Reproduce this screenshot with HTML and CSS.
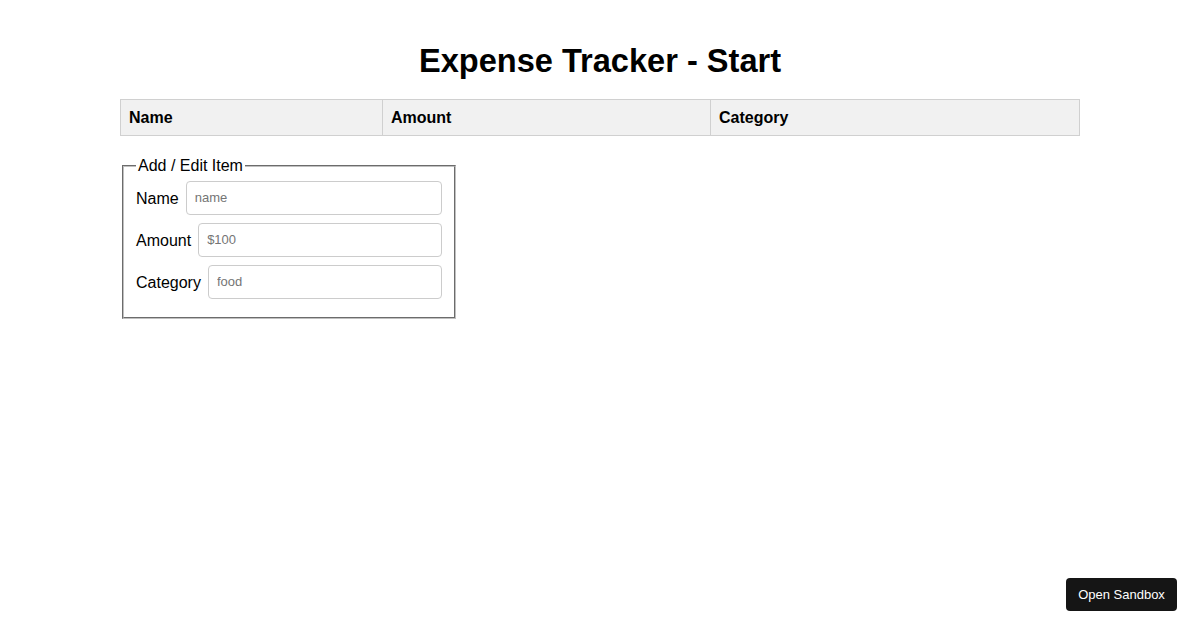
FILE: index.html
```html
<!DOCTYPE html>
<html lang="en">
<head>
<meta charset="utf-8">
<title>Expense Tracker - Start</title>
<link rel="stylesheet" href="styles.css">
</head>
<body>
<main class="app">
  <h1 class="title">Expense Tracker - Start</h1>
  <table class="expenses">
    <thead>
      <tr>
        <th class="col-name">Name</th>
        <th class="col-amount">Amount</th>
        <th class="col-category">Category</th>
      </tr>
    </thead>
    <tbody></tbody>
  </table>
  <form class="item-form">
    <fieldset class="item-fieldset">
      <legend class="item-legend">Add / Edit Item</legend>
      <div class="field">
        <label class="field-label" for="name">Name</label>
        <input class="field-input" id="name" type="text" placeholder="name">
      </div>
      <div class="field">
        <label class="field-label" for="amount">Amount</label>
        <input class="field-input" id="amount" type="text" placeholder="$100">
      </div>
      <div class="field">
        <label class="field-label" for="category">Category</label>
        <input class="field-input" id="category" type="text" placeholder="food">
      </div>
    </fieldset>
  </form>
</main>
<button class="sandbox-btn" type="button">Open Sandbox</button>
</body>
</html>
```
FILE: styles.css
```css
html, body {
  margin: 0;
  padding: 0;
  background: #ffffff;
  color: #000000;
  font-family: "Liberation Sans", Arial, sans-serif;
}

.app {
  width: 960px;
  margin: 0 auto;
  padding-top: 42px;
}

.title {
  margin: 0 0 20px;
  font-size: 32.6px;
  font-weight: bold;
  text-align: center;
  line-height: 37px;
}

.expenses {
  width: 960px;
  border-collapse: collapse;
  table-layout: fixed;
  margin-bottom: 21px;
}

.expenses th {
  box-sizing: border-box;
  background: #f1f1f1;
  border: 1px solid #d0d0d0;
  padding: 8px;
  text-align: left;
  font-size: 16px;
  font-weight: bold;
  line-height: 19px;
}

.col-name { width: 262px; }
.col-amount { width: 328px; }
.col-category { width: auto; }

.item-form {
  margin: 0;
}

.item-fieldset {
  width: 306px;
  margin: 0 2px;
  padding: 0.35em 12px 10px;
  border: 2px groove #c0c0c0;
}

.item-legend {
  padding: 0 2px;
  font-size: 16px;
}

.field {
  display: flex;
  align-items: center;
  gap: 7px;
  margin-bottom: 8px;
}

.field-label {
  font-size: 16px;
  white-space: nowrap;
  padding-top: 2px;
}

.field-input {
  flex: 1;
  min-width: 0;
  height: 34px;
  box-sizing: border-box;
  padding: 8px;
  border: 1px solid #cccccc;
  border-radius: 4px;
  font-family: "Liberation Sans", Arial, sans-serif;
  font-size: 13px;
  color: #000;
}

.field-input::placeholder {
  color: #757575;
}

.sandbox-btn {
  position: fixed;
  right: 23px;
  bottom: 19px;
  width: 111px;
  height: 33px;
  padding: 0;
  border: none;
  border-radius: 4px;
  background: #151515;
  color: #ffffff;
  font-family: "Liberation Sans", Arial, sans-serif;
  font-size: 13px;
}
```
